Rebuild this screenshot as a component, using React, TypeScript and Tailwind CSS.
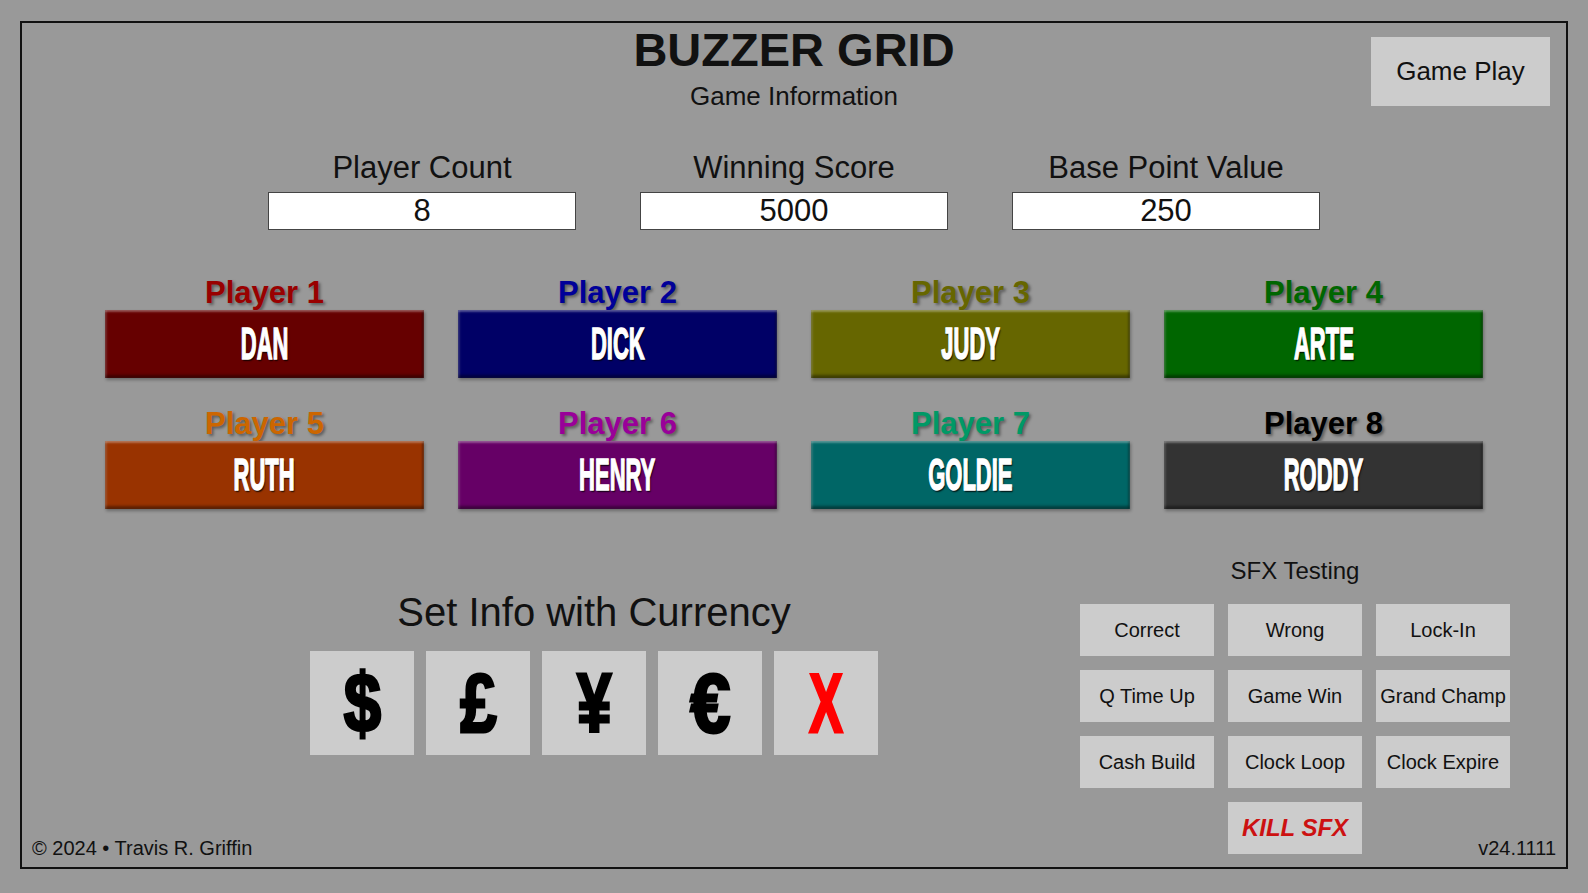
import React from 'react';

const players = [
  { label: 'Player 1', name: 'DAN', text: 'text-[#990000]', bg: 'bg-[#660000]' },
  { label: 'Player 2', name: 'DICK', text: 'text-[#000099]', bg: 'bg-[#000066]' },
  { label: 'Player 3', name: 'JUDY', text: 'text-[#666600]', bg: 'bg-[#666600]' },
  { label: 'Player 4', name: 'ARTE', text: 'text-[#006600]', bg: 'bg-[#006600]' },
  { label: 'Player 5', name: 'RUTH', text: 'text-[#cc6600]', bg: 'bg-[#993300]' },
  { label: 'Player 6', name: 'HENRY', text: 'text-[#990099]', bg: 'bg-[#660066]' },
  { label: 'Player 7', name: 'GOLDIE', text: 'text-[#009966]', bg: 'bg-[#006666]' },
  { label: 'Player 8', name: 'RODDY', text: 'text-[#000000]', bg: 'bg-[#333333]' },
];

const settings = [
  { label: 'Player Count', value: '8' },
  { label: 'Winning Score', value: '5000' },
  { label: 'Base Point Value', value: '250' },
];

const currencies = [
  { sym: '$', cls: 'text-black scale-x-[0.8]' },
  { sym: '£', cls: 'text-black scale-x-[0.78]' },
  { sym: '¥', cls: 'text-black scale-x-[0.74]' },
  { sym: '€', cls: 'text-black scale-x-[0.86]' },
  { sym: 'X', cls: 'text-[#ff0000] scale-x-[0.6]' },
];

const sfx = ['Correct', 'Wrong', 'Lock-In', 'Q Time Up', 'Game Win', 'Grand Champ', 'Cash Build', 'Clock Loop', 'Clock Expire'];

const App = () => {
  return (
    <div className="min-h-screen bg-[#999999] pt-[21px] px-[20px] font-['Liberation_Sans',Arial,sans-serif] text-[#111]">
      <div className="relative h-[848px] border-2 border-[#111] flex flex-col">
        {/* Header */}
        <div className="grid grid-cols-[1fr_auto_1fr]">
          <div />
          <div className="flex flex-col items-center pt-[4px]">
            <h1 className="text-[47px] leading-[46px] font-bold">BUZZER GRID</h1>
            <p className="mt-[10px] text-[26px] leading-[26px]">Game Information</p>
          </div>
          <div className="flex justify-end items-start pt-[14px] pr-[16px]">
            <button className="w-[179px] h-[69px] bg-[#cccccc] text-[26px]">Game Play</button>
          </div>
        </div>

        {/* Settings */}
        <div className="mt-[43px] flex justify-center gap-[64px]">
          {settings.map((s) => (
            <div key={s.label} className="w-[308px] flex flex-col items-center">
              <span className="text-[31px] leading-[31px]">{s.label}</span>
              <input
                readOnly
                defaultValue={s.value}
                className="mt-[9px] w-full h-[38px] border border-[#444] bg-white text-center text-[31px] leading-none outline-none"
              />
            </div>
          ))}
        </div>

        {/* Players */}
        <div className="mt-[48px] mx-auto w-[1378px] grid grid-cols-4 gap-x-[34px] gap-y-[31px]">
          {players.map((p) => (
            <div key={p.label} className="flex flex-col">
              <span className={`text-center text-[31px] leading-[30px] font-bold [text-shadow:2px_2px_3px_rgba(0,0,0,0.4)] ${p.text}`}>
                {p.label}
              </span>
              <div
                className={`mt-[2px] h-[68px] flex items-center justify-center ${p.bg} shadow-[inset_0_2px_2px_rgba(255,255,255,0.3),inset_0_-3px_3px_rgba(0,0,0,0.4),inset_2px_0_2px_rgba(255,255,255,0.15),inset_-2px_0_2px_rgba(0,0,0,0.25),1px_2px_3px_rgba(0,0,0,0.3)]`}
              >
                <span className="inline-block scale-x-[0.5] font-bold text-[44px] leading-none text-white [-webkit-text-stroke:1.5px_white] [text-shadow:2px_2px_2px_rgba(0,0,0,0.8)]">
                  {p.name}
                </span>
              </div>
            </div>
          ))}
        </div>

        {/* Bottom */}
        <div className="mt-[50px] flex items-start pl-[288px] gap-[202px]">
          <div className="w-[568px] flex flex-col items-center pt-[33px]">
            <h2 className="text-[40px] leading-[40px]">Set Info with Currency</h2>
            <div className="mt-[19px] flex gap-[12px]">
              {currencies.map((c) => (
                <button key={c.sym} className="w-[104px] h-[104px] bg-[#cccccc] flex items-center justify-center">
                  <span
                    className={`inline-block font-bold text-[84px] leading-none [-webkit-text-stroke:3px_currentColor] ${c.cls}`}
                  >
                    {c.sym}
                  </span>
                </button>
              ))}
            </div>
          </div>

          <div className="w-[430px] flex flex-col items-center">
            <h3 className="text-[24px] leading-[24px]">SFX Testing</h3>
            <div className="mt-[21px] grid grid-cols-3 gap-x-[14px] gap-y-[14px]">
              {sfx.map((s) => (
                <button key={s} className="w-[134px] h-[52px] bg-[#cccccc] text-[20px] whitespace-nowrap">
                  {s}
                </button>
              ))}
              <div />
              <button className="w-[134px] h-[52px] bg-[#cccccc] text-[24px] font-bold italic text-[#cc1111]">
                KILL SFX
              </button>
            </div>
          </div>
        </div>

        {/* Footer corners */}
        <span className="absolute left-[10px] bottom-[9px] text-[20px] leading-[20px]">© 2024 • Travis R. Griffin</span>
        <span className="absolute right-[10px] bottom-[9px] text-[20px] leading-[20px]">v24.1111</span>
      </div>
    </div>
  );
};

export default App;
